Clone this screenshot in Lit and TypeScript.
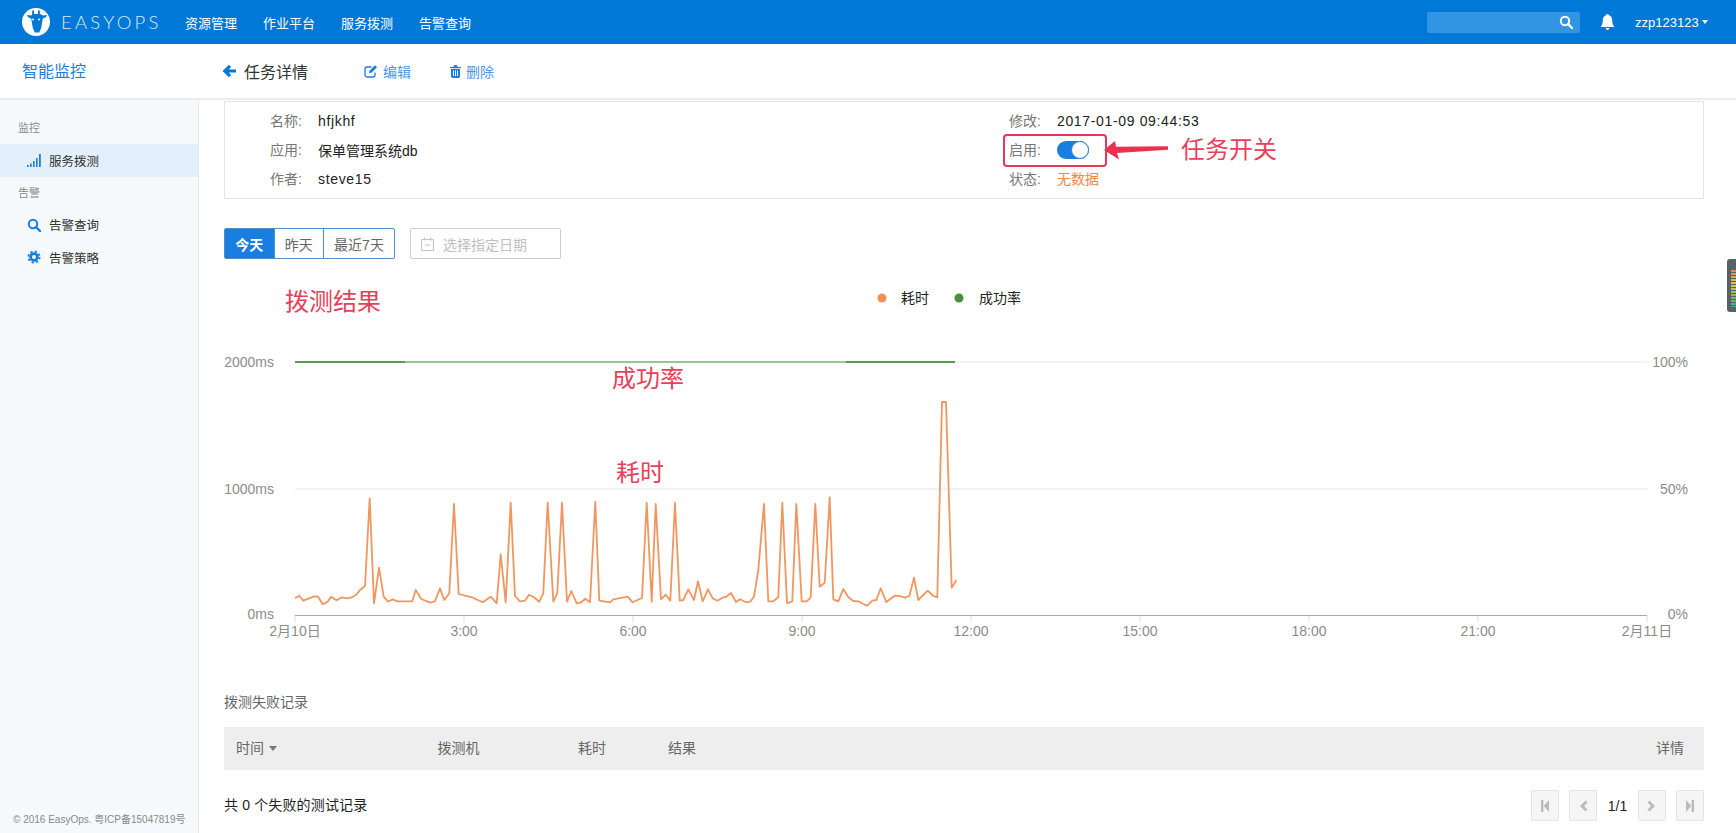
import { css, html, LitElement, svg } from "lit";
import { customElement } from "lit/decorators.js";

// traced from the reference, in page coordinates
const LEFT_TRACE = [[105,655],[118,647],[130,662],[147,655],[162,649],[174,650],[188,673],[203,665],[213,650],[230,661],[246,652],[260,655],[275,652],[288,645],[300,630],[315,618],[329,355],[342,670],[357,563],[371,650],[384,665],[398,658],[412,664],[457,664],[467,630],[484,657],[510,668],[525,664],[540,625],[553,660],[568,640],[582,372],[596,642],[636,652],[668,667],[692,650],[710,670],[722,523],[737,667],[752,368],[765,648],[780,664],[795,662],[807,644],[822,652],[838,665],[850,640],[863,368],[880,665],[892,640],[906,368],[921,665],[934,633],[950,670],[962,668],[976,656],[990,667],[1006,365],[1018,662],[1050,667],[1060,658],[1103,650],[1118,667],[1146,654],[1160,368],[1175,665],[1187,372],[1203,658],[1217,644],[1231,662]];
const RIGHT_TRACE = [[45,368],[59,662],[70,660],[85,628],[102,660],[114,604],[128,664],[144,628],[158,655],[172,662],[188,653],[198,651],[213,639],[228,666],[240,658],[258,667],[270,665],[282,650],[295,570],[312,372],[325,664],[340,664],[355,652],[367,368],[381,670],[397,664],[409,372],[425,664],[440,664],[452,652],[466,372],[479,620],[494,608],[509,352],[520,658],[535,664],[550,627],[564,650],[580,663],[595,664],[610,672],[622,677],[637,662],[649,660],[662,625],[679,666],[704,647],[720,648],[735,653],[748,648],[762,593],[775,660],[803,632],[820,648],[832,652],[846,66],[858,66],[875,623],[889,601]];

const tracePoints = [
  ...LEFT_TRACE.map(([x, y]) => [260 + x / 3, 380 + y / 3]),
  ...RIGHT_TRACE.map(([x, y]) => [660 + x / 3, 380 + y / 3]),
]
  .map(([x, y]) => `${x.toFixed(1)},${y.toFixed(1)}`)
  .join(" ");

const X_TICKS = [
  [295, "2月10日"],
  [464, "3:00"],
  [633, "6:00"],
  [802, "9:00"],
  [971, "12:00"],
  [1140, "15:00"],
  [1309, "18:00"],
  [1478, "21:00"],
  [1647, "2月11日"],
] as const;

const iconSearch = svg`<circle cx="6" cy="6" r="4.2" fill="none" stroke="currentColor" stroke-width="2"/><path d="M9 9l4 4" stroke="currentColor" stroke-width="2.4" stroke-linecap="round"/>`;

@customElement("app-root")
export class AppRoot extends LitElement {
  private pagerIcon(d: string) {
    return html`<span class="page-btn"><svg width="12" height="14" viewBox="0 0 12 14"><path d=${d} fill="#bbb"/></svg></span>`;
  }

  private renderChart() {
    return svg`
      <line x1="295" x2="1647" y1="362" y2="362" stroke="#e6e6e6"/>
      <line x1="295" x2="1647" y1="489" y2="489" stroke="#e6e6e6"/>
      ${X_TICKS.map(
        ([x, label]) => svg`
          <line x1=${x} x2=${x} y1="615" y2="622" stroke="#ddd"/>
          <text x=${x} y="636" text-anchor="middle" class="tick">${label}</text>`
      )}
      <line x1="295" x2="1647" y1="615.5" y2="615.5" stroke="#aaa"/>
      <text x="274" y="367" text-anchor="end" class="tick">2000ms</text>
      <text x="274" y="494" text-anchor="end" class="tick">1000ms</text>
      <text x="274" y="619" text-anchor="end" class="tick">0ms</text>
      <text x="1688" y="367" text-anchor="end" class="tick">100%</text>
      <text x="1688" y="494" text-anchor="end" class="tick">50%</text>
      <text x="1688" y="619" text-anchor="end" class="tick">0%</text>
      <line x1="295" x2="955" y1="362" y2="362" stroke="#7fb56f" stroke-width="1.6"/>
      <line x1="295" x2="405" y1="362" y2="362" stroke="#3f8f2f" stroke-width="1.6"/>
      <line x1="846" x2="955" y1="362" y2="362" stroke="#3f8f2f" stroke-width="1.6"/>
      <polyline points=${tracePoints} fill="none" stroke="#f29660" stroke-width="1.8" stroke-linejoin="round"/>
      <circle cx="882" cy="298" r="4.5" fill="#f29157"/>
      <text x="901" y="303" class="legend">耗时</text>
      <circle cx="959" cy="298" r="4.5" fill="#4a8f3c"/>
      <text x="979" y="303" class="legend">成功率</text>`;
  }

  render() {
    return html`
      <div class="page">
        <header class="topbar">
          <div class="brand">
            <svg width="28" height="28" viewBox="0 0 28 28">
              <circle cx="14" cy="14" r="14" fill="#fff"/>
              <path d="M10.2 2.5h1.8v3.4h4V2.5h1.8v3.6c1.2.2 2.2.7 3 1.5l4.2-.6c-.4 1.9-1.9 3.2-4.2 3.4l-1.6 9.6-2 4.5h-4.4l-2-4.5-1.6-9.6C6.9 10.200 5.400 8.900 5 7l4.200.6c.8-.8 1-1.300 1-1.500z" fill="#0078d7"/>
              <circle cx="11" cy="11.5" r="1" fill="#fff"/>
              <circle cx="17" cy="11.5" r="1" fill="#fff"/>
            </svg>
            <span class="wordmark">EASYOPS</span>
          </div>
          <nav class="nav">
            <span>资源管理</span><span>作业平台</span><span>服务拨测</span><span>告警查询</span>
          </nav>
          <div class="search">
            <svg width="14" height="14" viewBox="0 0 14 14" class="search-icon">${iconSearch}</svg>
          </div>
          <svg class="bell" width="15" height="16" viewBox="0 0 15 16">
            <path d="M7.5 0c.7 0 1.200.5 1.200 1.200 2.300.5 3.500 2.300 3.500 4.800 0 3.500.8 5.500 2.300 7H.5C2 11.500 2.800 9.500 2.800 6c0-2.500 1.200-4.300 3.500-4.800C6.300.5 6.800 0 7.500 0zM5.800 14h3.400c0 1.100-.7 2-1.700 2s-1.700-.9-1.700-2z" fill="#fff"/>
          </svg>
          <span class="user">zzp123123</span>
          <span class="caret"></span>
        </header>

        <div class="body">
          <aside class="sidebar">
            <div class="side-title">智能监控</div>
            <div class="side-label first">监控</div>
            <div class="side-item active">
              <svg width="14" height="14" viewBox="0 0 14 14">
                <path d="M0 12h1.600v2H0zM3 10.500h1.600V14H3zM6 8h1.600v6H6zM9 5h1.600v9H9zM12 1h1.800v13H12z" fill="#1a7de0"/>
              </svg>
              <span>服务拨测</span>
            </div>
            <div class="side-label">告警</div>
            <div class="side-item">
              <svg width="14" height="14" viewBox="0 0 14 14" class="blue">${iconSearch}</svg>
              <span>告警查询</span>
            </div>
            <div class="side-item">
              <svg width="14" height="14" viewBox="0 0 14 14">
                <circle cx="7" cy="7" r="3.4" fill="none" stroke="#1a7de0" stroke-width="2.8"/>
                <circle cx="7" cy="7" r="5.6" fill="none" stroke="#1a7de0" stroke-width="1.8" stroke-dasharray="2.2 2.2"/>
              </svg>
              <span>告警策略</span>
            </div>
            <div class="copyright">© 2016 EasyOps. 粤ICP备15047819号</div>
          </aside>

          <main class="main">
            <div class="head">
              <svg class="back" width="15" height="14" viewBox="0 0 15 14">
                <path d="M14 7H4M8 1.800L2.800 7 8 12.200" fill="none" stroke="#0078d7" stroke-width="3.2"/>
              </svg>
              <h1 class="head-title">任务详情</h1>
              <span class="action edit">
                <svg width="14" height="14" viewBox="0 0 14 14">
                  <path d="M11 8.500V11a2 2 0 0 1-2 2H3a2 2 0 0 1-2-2V5a2 2 0 0 1 2-2h4.500" fill="none" stroke="#1a7de0" stroke-width="1.3"/>
                  <path d="M5.500 6.800L11 1.300 13 3.300 7.500 8.800 5 9.300z" fill="#1a7de0"/>
                </svg>
                编辑
              </span>
              <span class="action">
                <svg width="11" height="13" viewBox="0 0 11 13">
                  <path d="M3.500 2V1l1-1h2l1 1v1H11v1.300H0V2zM1 4h9v7.500L9 13H2l-1-1.500zm2 1.500v5.500h1V5.500zm2 0v5.500h1V5.500zm2 0v5.500h1V5.500z" fill="#1a7de0" fill-rule="evenodd"/>
                </svg>
                删除
              </span>
            </div>

            <div class="content">
              <section class="info">
                <div class="info-row"><span class="key">名称:</span><span class="latin">hfjkhf</span></div>
                <div class="info-row"><span class="key">修改:</span><span class="latin">2017-01-09 09:44:53</span></div>
                <div class="info-row"><span class="key">应用:</span><span>保单管理系统db</span></div>
                <div class="info-row"><span class="key">启用:</span><span class="toggle"></span></div>
                <div class="info-row"><span class="key">作者:</span><span class="latin">steve15</span></div>
                <div class="info-row"><span class="key">状态:</span><span class="status">无数据</span></div>
              </section>

              <div class="range">
                <div class="range-group">
                  <span class="range-btn on">今天</span>
                  <span class="range-btn">昨天</span>
                  <span class="range-btn wide">最近7天</span>
                </div>
                <div class="date">
                  <svg width="13" height="14" viewBox="0 0 13 14">
                    <path d="M1.500 2.500h10a1 1 0 0 1 1 1v9a1 1 0 0 1-1 1h-10a1 1 0 0 1-1-1v-9a1 1 0 0 1 1-1zM3.500.5v3M9.500.5v3M4 8h5" fill="none" stroke="#c4c4c4" stroke-width="1.2"/>
                  </svg>
                  <span>选择指定日期</span>
                </div>
              </div>

              <svg class="chart" width="1480" height="410" viewBox="224 270 1480 410">
                ${this.renderChart()}
              </svg>

              <div class="records-title">拨测失败记录</div>
              <div class="table-head">
                <span>时间<i class="sort"></i></span>
                <span>拨测机</span>
                <span>耗时</span>
                <span>结果</span>
                <span>详情</span>
              </div>
              <div class="pager">
                <span class="total">共 0 个失败的测试记录</span>
                <div class="pages">
                  ${this.pagerIcon("M2 1h2.400v12H2zM10 1v12L4.800 7z")}
                  ${this.pagerIcon("M8.500 1.500l2 2L7 7l3.500 3.500-2 2L3 7z")}
                  <span class="page-count">1/1</span>
                  ${this.pagerIcon("M3.500 1.500l-2 2L5 7l-3.500 3.500 2 2L9 7z")}
                  ${this.pagerIcon("M10 1H7.600v12H10zM2 1v12l5.200-6z")}
                </div>
              </div>
            </div>
          </main>
        </div>

        <!-- red review notes drawn over the screenshot -->
        <div class="note note-result">拨测结果</div>
        <div class="note note-rate">成功率</div>
        <div class="note note-time">耗时</div>
        <div class="note note-switch">任务开关</div>
        <div class="note-box"></div>
        <svg class="note-arrow" width="66" height="20" viewBox="0 0 66 20">
          <path d="M0 10L11 1 12 6.800 64 6.300 64 9.800 13 13 15 19.500z" fill="#ee2f4f"/>
        </svg>
        <div class="meter"></div>
      </div>
    `;
  }

  static styles = css`
    :host {
      display: block;
      height: 100vh;
      overflow: hidden;
      font-family: "Liberation Sans", "Noto Sans CJK SC", sans-serif;
      font-size: 13px;
      color: #222;
      background: #fff;
    }

    .page {
      position: relative;
      height: 833px;
      overflow: hidden;
    }

    .topbar {
      height: 44px;
      background: #0078d7;
      display: flex;
      align-items: center;
      color: #fff;
    }

    .brand {
      display: flex;
      align-items: center;
      gap: 11px;
      margin-left: 22px;
      width: 163px;
    }

    .wordmark {
      font-family: Lato, "Liberation Sans", sans-serif;
      font-weight: 300;
      font-size: 18.5px;
      letter-spacing: 3.2px;
      color: #d6ebfc;
      white-space: nowrap;
    }

    .nav {
      display: flex;
      gap: 26px;
      flex: 1;
    }

    .search {
      width: 153px;
      height: 21px;
      background: #3295e3;
      border-radius: 2px;
      display: flex;
      align-items: center;
      justify-content: flex-end;
      padding-right: 7px;
      box-sizing: border-box;
      margin-right: 20px;
    }

    .search-icon {
      color: #fff;
    }

    .bell {
      margin-right: 20px;
    }

    .user {
      font-size: 13px;
      width: 67px;
    }

    .caret {
      border: 3px solid transparent;
      border-top: 4px solid #fff;
      border-bottom: 0;
      margin-right: 28px;
    }

    .body {
      display: flex;
      height: 789px;
    }

    .sidebar {
      width: 199px;
      flex: none;
      box-sizing: border-box;
      background: #f7fafd;
      border-right: 1px solid #e8e8e8;
      display: flex;
      flex-direction: column;
    }

    .side-title {
      height: 54px;
      line-height: 56px;
      padding-left: 22px;
      font-size: 16px;
      color: #1a7de0;
      background: #fff;
      border-bottom: 2px solid #ececec;
      margin-right: -1px;
      flex: none;
    }

    .side-label {
      height: 20px;
      line-height: 20px;
      padding-left: 18px;
      margin: 6px 0;
      font-size: 11px;
      color: #888;
    }

    .side-label.first {
      margin: 18px 0 6px;
    }

    .side-item {
      height: 32.5px;
      display: flex;
      align-items: center;
      gap: 8px;
      padding-left: 27px;
      font-size: 12.5px;
      color: #333;
    }

    .side-item.active {
      background: #e3f0fc;
    }

    .blue {
      color: #1a7de0;
    }

    .copyright {
      margin-top: auto;
      padding: 0 0 6px 13px;
      font-size: 10px;
      line-height: 14px;
      color: #888;
      white-space: nowrap;
    }

    .main {
      flex: 1;
      min-width: 0;
    }

    .head {
      height: 54px;
      display: flex;
      align-items: center;
      padding-left: 23px;
      background: #fff;
      border-bottom: 2px solid #ececec;
    }

    .back {
      margin-right: 7px;
    }

    .head-title {
      margin: 0;
      font-size: 16px;
      font-weight: 400;
      color: #333;
      width: 120px;
    }

    .action {
      display: flex;
      align-items: center;
      gap: 5px;
      font-size: 14px;
      color: #4a97e8;
    }

    .action.edit {
      width: 86px;
    }

    .content {
      padding: 1px 32px 0 25px;
    }

    .info {
      border: 1px solid #e5e5e5;
      height: 98px;
      box-sizing: border-box;
      padding: 4px 0 6px;
      display: grid;
      grid-template-columns: 1fr 1fr;
      grid-auto-rows: 29px;
      font-size: 14px;
    }

    .info-row {
      display: flex;
      align-items: center;
      padding-left: 45px;
      white-space: nowrap;
    }

    .key {
      width: 48px;
      color: #777;
      padding-bottom: 2px;
    }

    .latin {
      letter-spacing: 0.65px;
    }

    .toggle {
      width: 32px;
      height: 18px;
      border-radius: 9px;
      background: #1a7de0;
      position: relative;
    }

    .toggle::after {
      content: "";
      position: absolute;
      right: 0;
      top: 0;
      width: 18px;
      height: 18px;
      box-sizing: border-box;
      border-radius: 50%;
      background: #fff;
      border: 1.5px solid #2f85d8;
    }

    .status {
      color: #f0883e;
      padding-bottom: 2px;
    }

    .range {
      display: flex;
      margin-top: 29px;
      gap: 15px;
    }

    .range-group {
      display: flex;
      height: 31px;
      width: 171px;
      box-sizing: border-box;
      border: 1px solid #4f8fcb;
      border-radius: 2px;
      font-size: 14px;
      color: #666;
    }

    .range-btn {
      flex: 0 0 49.5px;
      display: flex;
      align-items: center;
      justify-content: center;
      border-right: 1px solid #4f8fcb;
      box-sizing: border-box;
    }

    .range-btn.on {
      background: #1a7de0;
      color: #fff;
      font-weight: 700;
    }

    .range-btn.wide {
      flex: 1;
      border-right: 0;
    }

    .date {
      width: 151px;
      height: 31px;
      box-sizing: border-box;
      border: 1px solid #ccc;
      border-radius: 2px;
      display: flex;
      align-items: center;
      gap: 9px;
      padding-left: 10px;
      font-size: 14px;
      color: #c0c0c0;
    }

    .chart {
      display: block;
      margin-top: 11px;
    }

    .tick {
      font-size: 14px;
      fill: #8c8c8c;
    }

    .legend {
      font-size: 14px;
      fill: #222;
    }

    .records-title {
      margin-top: 12px;
      line-height: 20px;
      font-size: 14px;
      color: #666;
    }

    .table-head {
      margin-top: 15px;
      height: 43px;
      padding: 0 20px 3px 12px;
      box-sizing: border-box;
      background: #eee;
      display: grid;
      grid-template-columns: 201.5px 140.5px 90px 1fr auto;
      align-items: center;
      font-size: 14px;
      color: #666;
    }

    .sort {
      display: inline-block;
      margin-left: 5px;
      vertical-align: 2px;
      border: 4px solid transparent;
      border-top: 5px solid #777;
      border-bottom: 0;
    }

    .pager {
      margin-top: 20px;
      display: flex;
      align-items: center;
      justify-content: space-between;
    }

    .total {
      font-size: 14px;
      letter-spacing: 0.15px;
      color: #222;
      padding-bottom: 4px;
    }

    .pages {
      display: flex;
      align-items: center;
      gap: 10px;
    }

    .page-btn {
      width: 28px;
      height: 31px;
      box-sizing: border-box;
      border: 1px solid #e4e4e4;
      border-radius: 2px;
      background: #f5f5f5;
      display: flex;
      align-items: center;
      justify-content: center;
    }

    .page-count {
      width: 21px;
      text-align: center;
      font-size: 14px;
    }

    .note {
      position: absolute;
      font-size: 24px;
      line-height: 36px;
      color: #e8405a;
      white-space: nowrap;
    }

    .note-result {
      left: 285px;
      top: 284px;
    }

    .note-rate {
      left: 612px;
      top: 361px;
    }

    .note-time {
      left: 616px;
      top: 455px;
    }

    .note-switch {
      left: 1181px;
      top: 132px;
    }

    .note-box {
      position: absolute;
      left: 1003px;
      top: 134px;
      width: 100px;
      height: 29px;
      border: 2.5px solid #e8365a;
      border-radius: 4px;
    }

    .note-arrow {
      position: absolute;
      left: 1104px;
      top: 140px;
    }

    .meter {
      position: absolute;
      left: 1727px;
      top: 259px;
      width: 9px;
      height: 53px;
      background: #5a6068;
      border-radius: 3px 0 0 3px;
    }

    .meter::after {
      content: "";
      position: absolute;
      left: 4px;
      top: 11px;
      width: 5px;
      height: 37px;
      background:
        repeating-linear-gradient(to bottom, transparent 0 2px, #5a6068 2px 3px),
        linear-gradient(to bottom, #d98a5c, #d8c850 40%, #7cc060 70%, #3cb48c);
    }
  `;
}
